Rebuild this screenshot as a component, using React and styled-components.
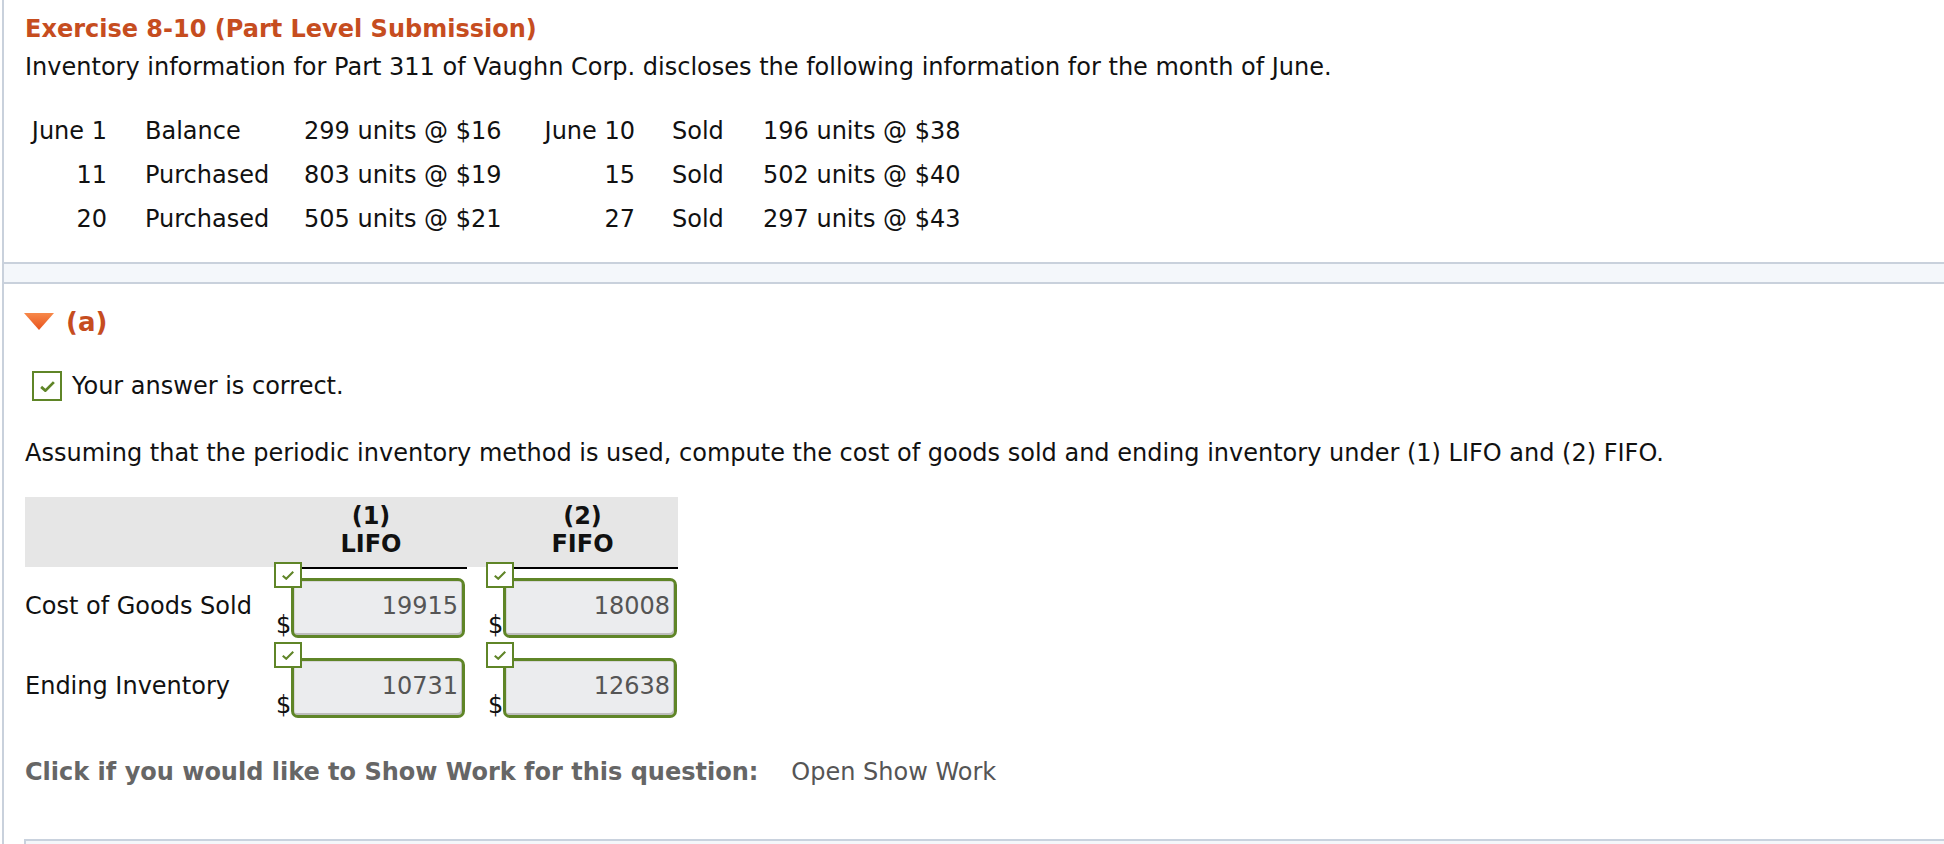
import styled, { createGlobalStyle } from "styled-components";

const GlobalStyle = createGlobalStyle`
  html, body {
    margin: 0;
    padding: 0;
    background: #fff;
    overflow: hidden;
  }
  body {
    font-family: "DejaVu Sans", Verdana, sans-serif;
    font-size: 24px;
    color: #111;
  }
`;

const inventory = [
  ["June 1", "Balance", "299 units @ $16", "June 10", "Sold", "196 units @ $38"],
  ["11", "Purchased", "803 units @ $19", "15", "Sold", "502 units @ $40"],
  ["20", "Purchased", "505 units @ $21", "27", "Sold", "297 units @ $43"],
];

const answers = [
  { label: "Cost of Goods Sold", lifo: "19915", fifo: "18008" },
  { label: "Ending Inventory", lifo: "10731", fifo: "12638" },
];

const CheckMark = ({ size = 14, weight = 2.4 }) => (
  <svg width={size} height={size * 0.75} viewBox="0 0 16 12">
    <path d="M2 6.5 L6 10 L14 2" fill="none" stroke="#5f8527" strokeWidth={weight} />
  </svg>
);

const App = () => {
  return (
    <>
      <GlobalStyle />
      <Page>
        <TopPanel>
          <Title>Exercise 8-10 (Part Level Submission)</Title>
          <Intro>
            Inventory information for Part 311 of Vaughn Corp. discloses the following
            information for the month of June.
          </Intro>
          <InventoryGrid>
            {inventory.map((row, i) =>
              row.map((cell, j) => (
                <InvCell key={`${i}-${j}`} $col={j}>
                  {cell}
                </InvCell>
              ))
            )}
          </InventoryGrid>
        </TopPanel>
        <PanelGap />
        <PartPanel>
          <PartHeader>
            <svg width="30" height="17" viewBox="0 0 30 17">
              <defs>
                <linearGradient id="tri" x1="0" y1="0" x2="0" y2="1">
                  <stop offset="0" stopColor="#f7894a" />
                  <stop offset="1" stopColor="#e8521c" />
                </linearGradient>
              </defs>
              <polygon points="0,0 30,0 15,17" fill="url(#tri)" />
            </svg>
            <PartLabel>(a)</PartLabel>
          </PartHeader>
          <CorrectRow>
            <CorrectBox>
              <CheckMark size={17} weight={2.6} />
            </CorrectBox>
            Your answer is correct.
          </CorrectRow>
          <Question>
            Assuming that the periodic inventory method is used, compute the cost of goods
            sold and ending inventory under (1) LIFO and (2) FIFO.
          </Question>
          <AnswerGrid>
            <HeadCell />
            <HeadCell $line>
              <span>(1)</span>
              <span>LIFO</span>
            </HeadCell>
            <span />
            <HeadCell $line>
              <span>(2)</span>
              <span>FIFO</span>
            </HeadCell>
            {answers.map((a) => [
              <RowLabel key={a.label}>{a.label}</RowLabel>,
              <InputCell key={a.label + "l"}>
                <Badge>
                  <CheckMark size={14} />
                </Badge>
                <Dollar>$</Dollar>
                <ValueBox>{a.lifo}</ValueBox>
              </InputCell>,
              <span key={a.label + "g"} />,
              <InputCell key={a.label + "f"}>
                <Badge>
                  <CheckMark size={14} />
                </Badge>
                <Dollar>$</Dollar>
                <ValueBox>{a.fifo}</ValueBox>
              </InputCell>,
            ])}
          </AnswerGrid>
          <ShowWork>
            <strong>Click if you would like to Show Work for this question:</strong>
            <OpenLink>Open Show Work</OpenLink>
          </ShowWork>
          <NextPart />
        </PartPanel>
      </Page>
    </>
  );
};

export default App;

const Page = styled.div`
  margin-left: 2px;
  border-left: 2px solid #c9d1dc;
  min-height: 844px;
`;

const TopPanel = styled.section`
  box-sizing: border-box;
  height: 264px;
  padding: 14px 0 0 21px;
  border-bottom: 2px solid #c9d1dc;
`;

const Title = styled.h1`
  margin: 0 0 8px;
  font-size: 24px;
  line-height: 30px;
  font-weight: bold;
  color: #c64d1f;
`;

const Intro = styled.p`
  margin: 0;
  line-height: 30px;
`;

const InventoryGrid = styled.div`
  margin-top: 27px;
  display: grid;
  grid-template-columns: 82px 197px 226px 105px 128px auto;
  line-height: 44px;
  white-space: nowrap;
`;

const InvCell = styled.div`
  text-align: ${(p) => (p.$col === 0 || p.$col === 3 ? "right" : "left")};
  padding-left: ${(p) => (p.$col === 1 ? "38px" : p.$col === 4 ? "37px" : "0")};
`;

const PanelGap = styled.div`
  height: 18px;
  background: #f4f7fb;
`;

const PartPanel = styled.section`
  border-top: 2px solid #c9d1dc;
  padding: 23px 0 0 21px;
`;

const PartHeader = styled.div`
  display: flex;
  align-items: center;
  gap: 12px;
  margin-left: -1px;
  height: 30px;
  svg {
    margin-top: -2px;
  }
`;

const PartLabel = styled.span`
  font-size: 26px;
  line-height: 30px;
  font-weight: bold;
  color: #c64d1f;
`;

const CorrectRow = styled.div`
  display: flex;
  align-items: center;
  gap: 10px;
  margin: 34px 0 0 7px;
  line-height: 30px;
`;

const CorrectBox = styled.span`
  box-sizing: border-box;
  width: 30px;
  height: 30px;
  border: 2px solid #5f8527;
  background: #fff;
  display: flex;
  align-items: center;
  justify-content: center;
`;

const Question = styled.p`
  margin: 37px 0 0;
  line-height: 30px;
`;

const AnswerGrid = styled.div`
  margin-top: 29px;
  display: grid;
  grid-template-columns: 249px 193px 19px 192px;
  width: 653px;
  background: linear-gradient(#e6e6e6, #e6e6e6) top left / 100% 70px no-repeat;
`;

const HeadCell = styled.div`
  box-sizing: border-box;
  height: 72px;
  padding-top: 5px;
  display: flex;
  flex-direction: column;
  align-items: center;
  font-weight: bold;
  line-height: 28px;
  color: #111;
  border-bottom: ${(p) => (p.$line ? "2px solid #000" : "none")};
  margin-left: ${(p) => (p.$line ? "1px" : "0")};
`;

const RowLabel = styled.div`
  padding-top: 22px;
  line-height: 30px;
  white-space: nowrap;
`;

const InputCell = styled.div`
  position: relative;
  box-sizing: border-box;
  height: 80px;
  padding: 8px 0 11px 2px;
  display: flex;
  align-items: flex-end;
`;

const Badge = styled.span`
  position: absolute;
  top: -7px;
  left: 0;
  box-sizing: border-box;
  width: 28px;
  height: 26px;
  border: 2px solid #5f8527;
  background: #fff;
  display: flex;
  align-items: center;
  justify-content: center;
  z-index: 1;
`;

const Dollar = styled.span`
  width: 15px;
  line-height: 24px;
  margin-bottom: 1px;
`;

const ValueBox = styled.div`
  box-sizing: border-box;
  width: 174px;
  height: 60px;
  border: 3px solid #5f8527;
  border-radius: 7px;
  background: #ebecee;
  box-shadow: inset 1px 1px 0 #d6d6d6, inset -1px -2px 0 #bdbdbd;
  display: flex;
  align-items: center;
  justify-content: flex-end;
  padding: 0 4px 4px 0;
  color: #555;
  font-size: 24px;
`;

const ShowWork = styled.div`
  margin-top: 28px;
  line-height: 30px;
  color: #666;
  white-space: nowrap;
  strong {
    font-weight: bold;
  }
`;

const OpenLink = styled.span`
  margin-left: 33px;
  color: #555;
`;

const NextPart = styled.div`
  margin: 52px 0 0 -1px;
  height: 40px;
  border-top: 2px solid #c9d2de;
  border-left: 2px solid #c9d2de;
  background: #f4f7fa;
`;
